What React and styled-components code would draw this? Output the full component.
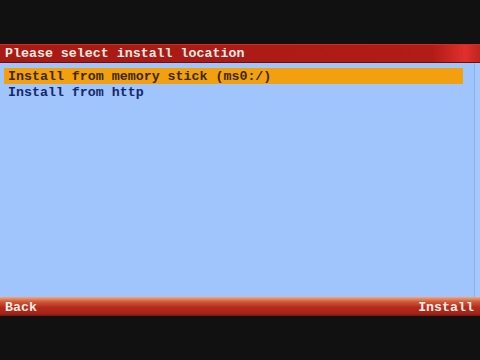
import { createGlobalStyle } from 'styled-components';
import styled from 'styled-components';

const GlobalStyle = createGlobalStyle`
  html, body {
    margin: 0;
    padding: 0;
    background: #111111;
  }
`;

const Screen = styled.div`
  width: 480px;
  height: 360px;
  background: #111111;
  display: flex;
  flex-direction: column;
  font-family: "Liberation Mono", "DejaVu Sans Mono", monospace;
  font-weight: bold;
  font-size: 13.3px;
  overflow: hidden;
`;

const Letterbox = styled.div`
  height: ${(p) => p.h}px;
  flex: none;
`;

const TitleBar = styled.div`
  height: 19px;
  flex: none;
  display: flex;
  align-items: center;
  padding-left: 5px;
  color: #f4ece4;
  background: linear-gradient(to right, #a81a14 0%, #b01c16 90%, #e0302c 97%, #c02420 100%);
  box-shadow: inset 0 -1px 0 #6a1010, inset 0 1px 0 #c83028;
`;

const Panel = styled.div`
  flex: 1;
  background: #a0c4fc;
  padding: 5px 0 0 4px;
  display: flex;
  flex-direction: column;
  border-right: 1px solid #8cb0ea;
  margin-right: 5px;
  box-shadow: 5px 0 0 #a6c8fc;
`;

const Row = styled.div`
  height: 16px;
  width: 459px;
  display: flex;
  align-items: center;
  padding-left: 4px;
  box-sizing: border-box;
  color: ${(p) => (p.selected ? '#3a2808' : '#14286a')};
  background: ${(p) => (p.selected ? '#f2a010' : 'transparent')};
`;

const BottomBar = styled.div`
  height: 19px;
  flex: none;
  display: flex;
  align-items: center;
  justify-content: space-between;
  padding: 2px 6px 0 5px;
  box-sizing: border-box;
  color: #f8f0e8;
  background: linear-gradient(to bottom, #f0a880 0%, #d05838 25%, #b42a1c 55%, #a82418 85%, #7a1810 100%);
`;

export default function App() {
  return (
    <>
      <GlobalStyle />
      <Screen>
        <Letterbox h={44} />
        <TitleBar>Please select install location</TitleBar>
        <Panel>
          <Row selected>Install from memory stick (ms0:/)</Row>
          <Row>Install from http</Row>
        </Panel>
        <BottomBar>
          <span>Back</span>
          <span>Install</span>
        </BottomBar>
        <Letterbox h={44} />
      </Screen>
    </>
  );
}
